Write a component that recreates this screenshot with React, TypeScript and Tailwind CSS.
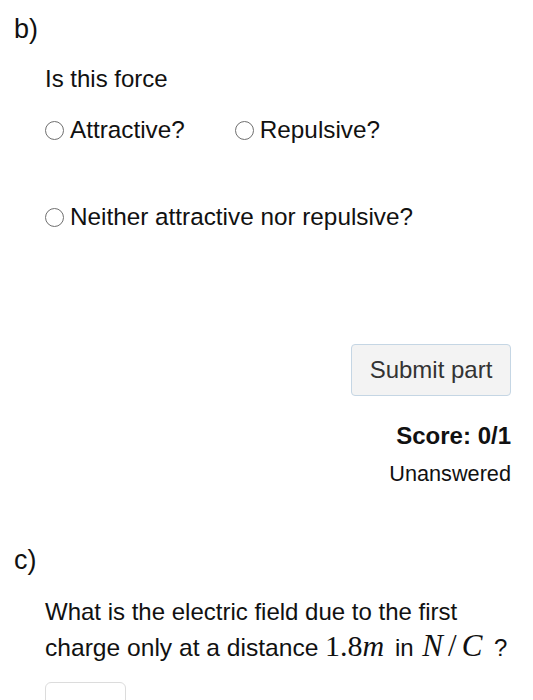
import React from 'react';

const Radio = ({ label }: { label: string }) => (
  <label className="flex items-center">
    <span className="w-[19px] h-[19px] rounded-full border-[1.5px] border-[#6f6f6f] bg-white" />
    <span className="ml-[6px]">{label}</span>
  </label>
);

export default function App() {
  return (
    <div className="min-h-[700px] bg-white text-[#111] pl-[14px] pr-[22px] pt-[13px] font-['Liberation_Sans',Arial,sans-serif]">
      <h2 className="text-[27px] leading-[32px]">b)</h2>

      <div className="pl-[31px]">
        <p className="mt-[18px] text-[24px] leading-[32px]">Is this force</p>

        <div className="mt-[19px] flex text-[24.3px] leading-[32px]">
          <Radio label="Attractive?" />
          <div className="ml-[50px]">
            <Radio label="Repulsive?" />
          </div>
        </div>
        <div className="mt-[55px] text-[24.3px] leading-[32px]">
          <Radio label="Neither attractive nor repulsive?" />
        </div>

        <div className="mt-[111px] flex justify-end">
          <button className="w-[160px] h-[52px] rounded-[4px] border border-[#c5d6e4] bg-[#f3f3f3] text-[24px] text-[#333]">
            Submit part
          </button>
        </div>

        <div className="text-right">
          <p className="mt-[24px] text-[24px] leading-[32px] font-bold">Score: 0/1</p>
          <p className="mt-[6px] text-[21.7px] leading-[32px]">Unanswered</p>
        </div>
      </div>

      <h2 className="mt-[54px] text-[27px] leading-[32px]">c)</h2>

      <div className="pl-[31px]">
        <p className="mt-[18px] text-[24px] leading-[36px]">
          What is the electric field due to the first
          <br />
          <span className="text-[24.6px]">charge only at a distance</span>{' '}
          <span className="font-['Liberation_Serif',serif] text-[30px] leading-none mr-[4px]">
            1.8<i>m</i>
          </span>{' '}
          in{' '}
          <span className="font-['Liberation_Serif',serif] text-[31px] leading-none ml-[2px] mr-[5px]">
            <i>N</i>
            <span className="mx-[5px]">/</span>
            <i>C</i>
          </span>{' '}
          ?
        </p>
        <div className="mt-[16px] w-[81px] h-[40px] rounded-[6px] border-[1.5px] border-[#dcdcdc]" />
      </div>
    </div>
  );
}
